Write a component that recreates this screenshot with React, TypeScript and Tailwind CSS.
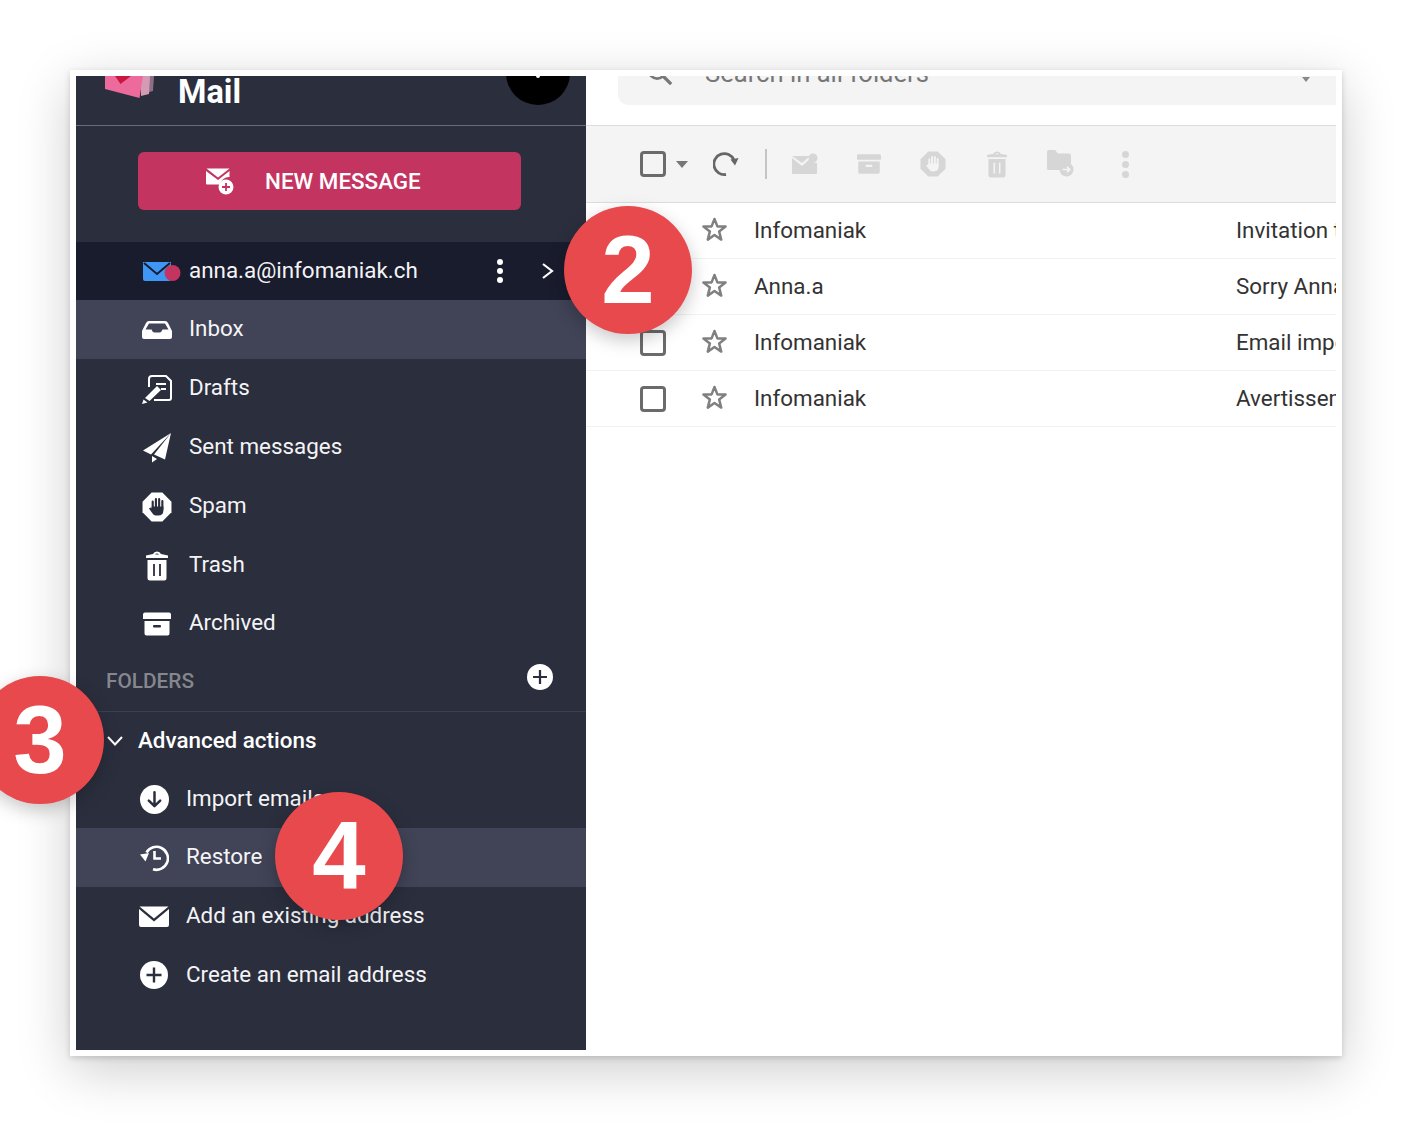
import React from "react";

const DARK = "#2b2e3d";

function InboxIcon() {
  return (
    <svg width="30" height="20" viewBox="0 0 30 20">
      <path fillRule="evenodd" fill="#fff" d="M7 1H23Q25 1 26 3L30 11V17Q30 19 28 19H2Q0 19 0 17V11L4 3Q5 1 7 1ZM7 3.500L3.500 9.500H9.500Q10.500 12.500 12.500 12.500H17.500Q19.500 12.500 20.500 9.500H26.500L23 3.500Z" />
    </svg>
  );
}

function DraftsIcon() {
  return (
    <svg width="30" height="30" viewBox="0 0 30 30">
      <path fill="none" stroke="#fff" strokeWidth="2" d="M7 13V5Q7 2 10 2H24L29 7V24Q29 26 27 26H12" />
      <path stroke="#fff" strokeWidth="2" d="M14 10H24M19 15H24" />
      <path fill="#fff" d="M15 12L19 16L7.500 27L3 24ZM1.500 25.500L5.500 28.500L0 30Z" />
    </svg>
  );
}

function SentIcon() {
  return (
    <svg width="30" height="30" viewBox="0 0 30 30">
      <path fill="#fff" d="M29 0L1 17.500L9 21.500ZM29 0L12 21.500L23 26.500ZM10 23V29.500L15 26Z" />
    </svg>
  );
}

function HandIcon({ fill, hand, size }: { fill: string; hand: string; size: number }) {
  return (
    <svg width={size} height={size} viewBox="0 0 28 28">
      <path fill={fill} d="M9 0.500H19L27.500 9V19L19 27.500H9L0.500 19V9Z" />
      <g stroke={hand} strokeWidth="2" strokeLinecap="round">
        <path d="M10 9V15M13 6.500V14M16 6.500V14M19 8.500V16" />
      </g>
      <path fill={hand} d="M9 13.500H20V17Q20 22 15 22H13Q11 22 9.500 19.500L6.500 15.500L8 14.500L9 15.500Z" />
    </svg>
  );
}

function TrashIcon({ fill, bar, width, height }: { fill: string; bar: string; width: number; height: number }) {
  return (
    <svg width={width} height={height} viewBox="0 0 24 30">
      <path fill={fill} d="M8 3Q9 0.500 12 0.500Q15 0.500 16 3L23 4.500V7H1V4.500ZM10 3.500H14Q13.500 2.500 12 2.500Q10.500 2.500 10 3.500Z" />
      <path fill={fill} d="M2.500 9H21.500V27Q21.500 29.500 19 29.500H5Q2.500 29.500 2.500 27Z" />
      <path stroke={bar} strokeWidth="1.800" d="M9 13V25M15 13V25" />
    </svg>
  );
}

function ArchiveIcon({ fill, slot, width, height }: { fill: string; slot: string; width: number; height: number }) {
  return (
    <svg width={width} height={height} viewBox="0 0 28 24">
      <path fill={fill} d="M2 0.500H26Q28 0.500 28 2.500V7H0V2.500Q0 0.500 2 0.500ZM1.500 9H26.500V21.500Q26.500 23.500 24.500 23.500H3.500Q1.500 23.500 1.500 21.500Z" />
      <rect x="10" y="13" width="8" height="2.500" rx="1" fill={slot} />
    </svg>
  );
}

function CirclePlus({ size, lineColor }: { size: number; lineColor: string }) {
  return (
    <svg width={size} height={size} viewBox="0 0 28 28">
      <circle cx="14" cy="14" r="14" fill="#fff" />
      <path stroke={lineColor} strokeWidth="2.400" d="M14 6.500V21.500M6.500 14H21.500" />
    </svg>
  );
}

function ImportIcon() {
  return (
    <svg width="29" height="29" viewBox="0 0 28 28">
      <circle cx="14" cy="14" r="14" fill="#fff" />
      <path fill="none" stroke={DARK} strokeWidth="2.400" strokeLinecap="round" strokeLinejoin="round" d="M14 7V20M8.500 15L14 20.500L19.500 15" />
    </svg>
  );
}

function RestoreIcon() {
  return (
    <svg width="29" height="29" viewBox="0 0 29 29">
      <path fill="none" stroke="#fff" strokeWidth="2.600" d="M6.500 9.500A11.500 11.500 0 1 1 13 26.300" />
      <path fill="#fff" d="M0 11.500L9 10L5.500 18.500Z" />
      <path fill="none" stroke="#fff" strokeWidth="2.600" d="M14.500 8V15.500H21" />
    </svg>
  );
}

function EnvelopeIcon() {
  return (
    <svg width="30" height="21" viewBox="0 0 30 21">
      <path fill="#fff" d="M0.500 0.500H29.500L15 12.500ZM0 3V19Q0 21 2 21H28Q30 21 30 19V3L15 15.500Z" />
    </svg>
  );
}

function NavRow({ icon, label, height, active }: { icon: React.ReactNode; label: string; height: string; active?: boolean }) {
  return (
    <div className={`flex items-center pl-[66px] text-[22.4px] text-[#f4f4f6] ${height} ${active ? "bg-[#414357]" : ""}`}>
      <span className="flex w-[30px] justify-center">{icon}</span>
      <span className="mb-[2px] ml-[17px]">{label}</span>
    </div>
  );
}

function SubRow({ icon, label, height, active }: { icon: React.ReactNode; label: string; height: string; active?: boolean }) {
  return (
    <div className={`flex items-center pl-[63px] text-[22.4px] text-[#f4f4f6] ${height} ${active ? "bg-[#414357]" : ""}`}>
      <span className="flex w-[30px] justify-center">{icon}</span>
      <span className={`ml-[17px] whitespace-nowrap ${active ? "mb-[2px]" : ""}`}>{label}</span>
    </div>
  );
}

function Checkbox() {
  return <span className="block h-[26px] w-[26px] shrink-0 rounded-[4px] border-[3px] border-[#6b6b6b]" />;
}

function Star() {
  return (
    <svg width="25" height="25" viewBox="0 0 26 26">
      <path fill="none" stroke="#808080" strokeWidth="2.600" strokeLinejoin="round" d="M13 2L16 9.800H24.500L17.800 15L20 23.500L13 18.700L6 23.500L8.200 15L1.500 9.800H10Z" />
    </svg>
  );
}

function MailRow({ name, subject }: { name: string; subject: string }) {
  return (
    <div className="flex h-[56px] items-center border-b border-[#f2f2f2] pl-[54px] text-[22.4px] text-[#333]">
      <Checkbox />
      <span className="mb-[2px] ml-[36px] flex w-[26px] justify-center"><Star /></span>
      <span className="ml-[27px] w-[482px] shrink-0">{name}</span>
      <span className="whitespace-nowrap">{subject}</span>
    </div>
  );
}

function ToolSlot({ children }: { children: React.ReactNode }) {
  return <span className="flex w-[64px] justify-center">{children}</span>;
}

function Badge({ n, className }: { n: string; className: string }) {
  return (
    <div className={`absolute flex h-[128px] w-[128px] items-center justify-center rounded-full bg-[#e8494c] font-['Liberation_Sans',sans-serif] text-[96px] font-bold text-white shadow-[0_6px_18px_rgba(0,0,0,0.22)] ${className}`}>
      {n}
    </div>
  );
}

const rows = [
  { name: "Infomaniak", subject: "Invitation to" },
  { name: "Anna.a", subject: "Sorry Anna" },
  { name: "Infomaniak", subject: "Email import" },
  { name: "Infomaniak", subject: "Avertissement" },
];

export default function App() {
  const tool = "#d6d6d6";
  return (
    <div className="relative h-[1126px] w-[1412px] overflow-hidden bg-white pl-[70px] pt-[70px] font-['Roboto',sans-serif]">
      <div className="h-[986px] w-[1272px] bg-white p-[6px] shadow-[0_2px_6px_rgba(0,0,0,0.16),0_14px_50px_rgba(0,0,0,0.2)]">
        <div className="flex h-full overflow-hidden">
          <aside className="w-[510px] shrink-0 bg-[#2b2e3d]">
            <div className="flex h-[50px] border-b border-[#6a6c78]">
              <svg width="50" height="26" viewBox="0 0 50 26" className="ml-[29px] shrink-0">
                <path fill="#8c6f86" d="M41 0H49L48 15L41 17Z" />
                <path fill="#d59bb4" d="M36 0H45L44 18L36 20Z" />
                <path fill="#ec6a9c" d="M0 0H38L34.500 22L0 13Z" />
                <path fill="#c9173f" d="M10 0H26L15.500 8Z" />
              </svg>
              <span className="ml-[23px] text-[32.5px] font-bold leading-[32px] text-white">Mail</span>
              <div className="ml-auto mr-[16px] mt-[-35px] flex h-[64px] w-[64px] shrink-0 items-start justify-center rounded-full bg-black pt-[33px]">
                <span className="h-[4px] w-[4px] rounded-full bg-white" />
              </div>
            </div>
            <div className="ml-[62px] mt-[26px] flex h-[58px] w-[383px] items-center rounded-[6px] bg-[#c43460] pl-[68px] text-[22.4px] font-medium text-white">
              <svg width="28" height="27" viewBox="0 0 28 27">
                <path fill="#fff" d="M0.500 0.500H23.500L12 9.500ZM0 3V15.500Q0 16.500 1 16.500H14A9 9 0 0 1 23.500 9V3L12 12Z" />
                <circle cx="20" cy="19" r="7.500" fill="#fff" />
                <path stroke="#c43460" strokeWidth="1.800" d="M20 15V23M16 19H24" />
              </svg>
              <span className="ml-[31px] mt-[2px]">NEW MESSAGE</span>
            </div>
            <div className="mt-[32px] flex h-[58px] items-center bg-[#181c2d] pl-[67px] text-[22.4px] text-[#f4f4f6]">
              <svg width="38" height="20" viewBox="0 0 38 20" className="shrink-0">
                <path fill="#3f97f5" d="M0 1H28V18Q28 20 26 20H2Q0 20 0 18Z" />
                <path fill="none" stroke="#181c2d" strokeWidth="2" d="M1 2L14 13L27 2" />
                <circle cx="29.500" cy="12" r="8" fill="#c43460" />
              </svg>
              <span className="ml-[8px]">anna.a@infomaniak.ch</span>
              <span className="ml-auto flex flex-col gap-[3px]">
                <span className="h-[6px] w-[6px] rounded-full bg-white" />
                <span className="h-[6px] w-[6px] rounded-full bg-white" />
                <span className="h-[6px] w-[6px] rounded-full bg-white" />
              </span>
              <svg width="14" height="18" viewBox="0 0 14 18" className="ml-[38px] mr-[31px]">
                <path fill="none" stroke="#fff" strokeWidth="2.200" d="M2 2L11 9L2 16" />
              </svg>
            </div>
            <NavRow icon={<InboxIcon />} label="Inbox" height="h-[59px]" active />
            <NavRow icon={<DraftsIcon />} label="Drafts" height="h-[59px]" />
            <NavRow icon={<SentIcon />} label="Sent messages" height="h-[59px]" />
            <NavRow icon={<HandIcon fill="#fff" hand={DARK} size={30} />} label="Spam" height="h-[59px]" />
            <NavRow icon={<TrashIcon fill="#fff" bar={DARK} width={24} height={30} />} label="Trash" height="h-[59px]" />
            <NavRow icon={<ArchiveIcon fill="#fff" slot={DARK} width={28} height={24} />} label="Archived" height="h-[57px]" />
            <div className="flex h-[60px] items-start justify-between border-b border-[#3d4050] pl-[30px] pr-[33px]">
              <span className="mt-[17px] text-[20.8px] font-medium leading-[25px] text-[#85868e]">FOLDERS</span>
              <span className="mt-[12px]"><CirclePlus size={26} lineColor={DARK} /></span>
            </div>
            <div className="flex h-[58px] items-center pl-[30px] text-[22.4px] font-medium text-white">
              <svg width="18" height="12" viewBox="0 0 18 12">
                <path fill="none" stroke="#fff" strokeWidth="2" d="M2 2L9 9.500L16 2" />
              </svg>
              <span className="ml-[14px]">Advanced actions</span>
            </div>
            <SubRow icon={<ImportIcon />} label="Import emails" height="h-[58px]" />
            <SubRow icon={<RestoreIcon />} label="Restore" height="h-[59px]" active />
            <SubRow icon={<EnvelopeIcon />} label="Add an existing address" height="h-[58px]" />
            <SubRow icon={<CirclePlus size={28} lineColor={DARK} />} label="Create an email address" height="h-[59px]" />
          </aside>
          <main className="min-w-0 flex-1 bg-white">
            <div className="flex h-[50px] flex-col border-b border-[#dcdcdc]">
              <div className="-mt-[31px] ml-[32px] flex h-[60px] shrink-0 items-center rounded-bl-[10px] bg-[#f4f4f4] pl-[29px] pr-[26px] text-[25.6px] text-[#777]">
                <svg width="26" height="26" viewBox="0 0 28 28" className="mb-[5px] shrink-0">
                  <circle cx="11" cy="11" r="9" fill="none" stroke="#777" strokeWidth="3" />
                  <path stroke="#777" strokeWidth="3.500" d="M17.500 17.500L26 26" />
                </svg>
                <span className="mb-[4px] ml-[32px]">Search in all folders</span>
                <span className="ml-auto mt-[8px] h-0 w-0 border-x-[4px] border-t-[5px] border-x-transparent border-t-[#888]" />
              </div>
            </div>
            <div className="flex h-[77px] items-center border-b border-[#dcdcdc] bg-[#f4f4f4] pl-[54px]">
              <Checkbox />
              <span className="ml-[10px] h-0 w-0 border-x-[6px] border-t-[7px] border-x-transparent border-t-[#777]" />
              <svg width="26" height="26" viewBox="0 0 26 26" className="ml-[25px]">
                <path fill="none" stroke="#666" strokeWidth="2.800" d="M21 9A10.500 10.500 0 1 0 13 23.500" />
                <path fill="#666" d="M17.500 8.500L25.500 7L22 14.500Z" />
              </svg>
              <span className="ml-[26px] h-[30px] w-[2px] bg-[#c4c4c4]" />
              <span className="ml-[6px] flex items-center">
                <ToolSlot>
                  <svg width="26" height="22" viewBox="0 0 26 22">
                    <path fill={tool} d="M0 3H18L10 10ZM0 5V20Q0 21 1 21H24Q25 21 25 20V10A6 6 0 0 1 19 5L10 13Z" />
                    <circle cx="21" cy="5" r="4.500" fill={tool} />
                  </svg>
                </ToolSlot>
                <ToolSlot><ArchiveIcon fill={tool} slot="#f4f4f4" width={24} height={22} /></ToolSlot>
                <ToolSlot><HandIcon fill={tool} hand="#f4f4f4" size={26} /></ToolSlot>
                <ToolSlot><TrashIcon fill={tool} bar="#f4f4f4" width={22} height={27} /></ToolSlot>
                <ToolSlot>
                  <svg width="28" height="28" viewBox="0 0 28 28">
                    <path fill={tool} d="M0 1.500Q0 0 1.500 0H8L11 3.500H22Q24 3.500 24 5.500V14A8 8 0 0 0 13 20H1.500Q0 20 0 18.500Z" />
                    <circle cx="19.500" cy="19.500" r="7" fill={tool} />
                    <path stroke="#f4f4f4" strokeWidth="1.600" fill="none" d="M15.500 19.500H22.500M20 16.800L22.800 19.500L20 22.200" />
                  </svg>
                </ToolSlot>
                <ToolSlot>
                  <span className="flex flex-col gap-[3px]">
                    <span className="h-[7px] w-[7px] rounded-full bg-[#d6d6d6]" />
                    <span className="h-[7px] w-[7px] rounded-full bg-[#d6d6d6]" />
                    <span className="h-[7px] w-[7px] rounded-full bg-[#d6d6d6]" />
                  </span>
                </ToolSlot>
              </span>
            </div>
            {rows.map((r, i) => (
              <MailRow key={i} name={r.name} subject={r.subject} />
            ))}
          </main>
        </div>
      </div>
      <Badge n="2" className="left-[564px] top-[206px]" />
      <Badge n="3" className="left-[-24px] top-[676px]" />
      <Badge n="4" className="left-[275px] top-[792px]" />
    </div>
  );
}
